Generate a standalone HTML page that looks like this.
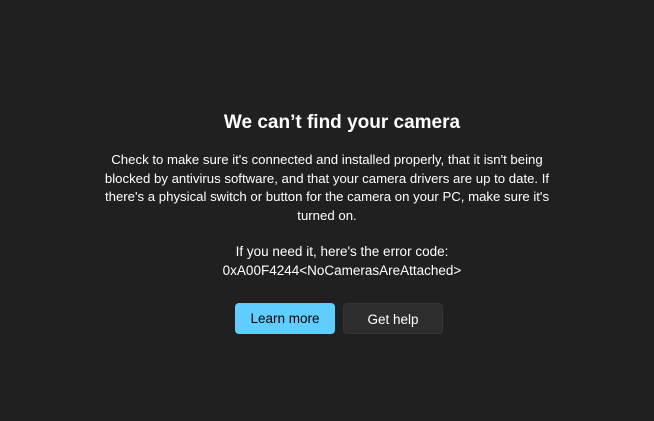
<!DOCTYPE html>
<html><head><meta charset="utf-8"><style>
body{margin:0;width:654px;height:421px;background:#202020;font-family:"Liberation Sans",sans-serif;color:#fff;position:relative;overflow:hidden}
.t{position:absolute;top:112px;left:15px;width:654px;text-align:center;font-size:19px;font-weight:bold}
.p{position:absolute;left:0;width:654px;text-align:center;font-size:13.5px;line-height:18.5px}
.b{position:absolute;top:303px;width:100px;height:31px;border-radius:4px;font-size:13.5px;line-height:31px;text-align:center;box-sizing:border-box}
</style></head><body>
<div class="t">We can’t find your camera</div>
<div class="p" style="top:151px;font-size:13.2px">Check to make sure it's connected and installed properly, that it isn't being<br>blocked by antivirus software, and that your camera drivers are up to date. If<br>there's a physical switch or button for the camera on your PC, make sure it's<br>turned on.</div>
<div class="p" style="top:243px;left:15px">If you need it, here's the error code:<br>0xA00F4244&lt;NoCamerasAreAttached&gt;</div>
<div class="b" style="left:235px;background:#60cdff;color:#000">Learn more</div>
<div class="b" style="left:343px;background:#2d2d2d;border:1px solid #353535">Get help</div>
</body></html>
